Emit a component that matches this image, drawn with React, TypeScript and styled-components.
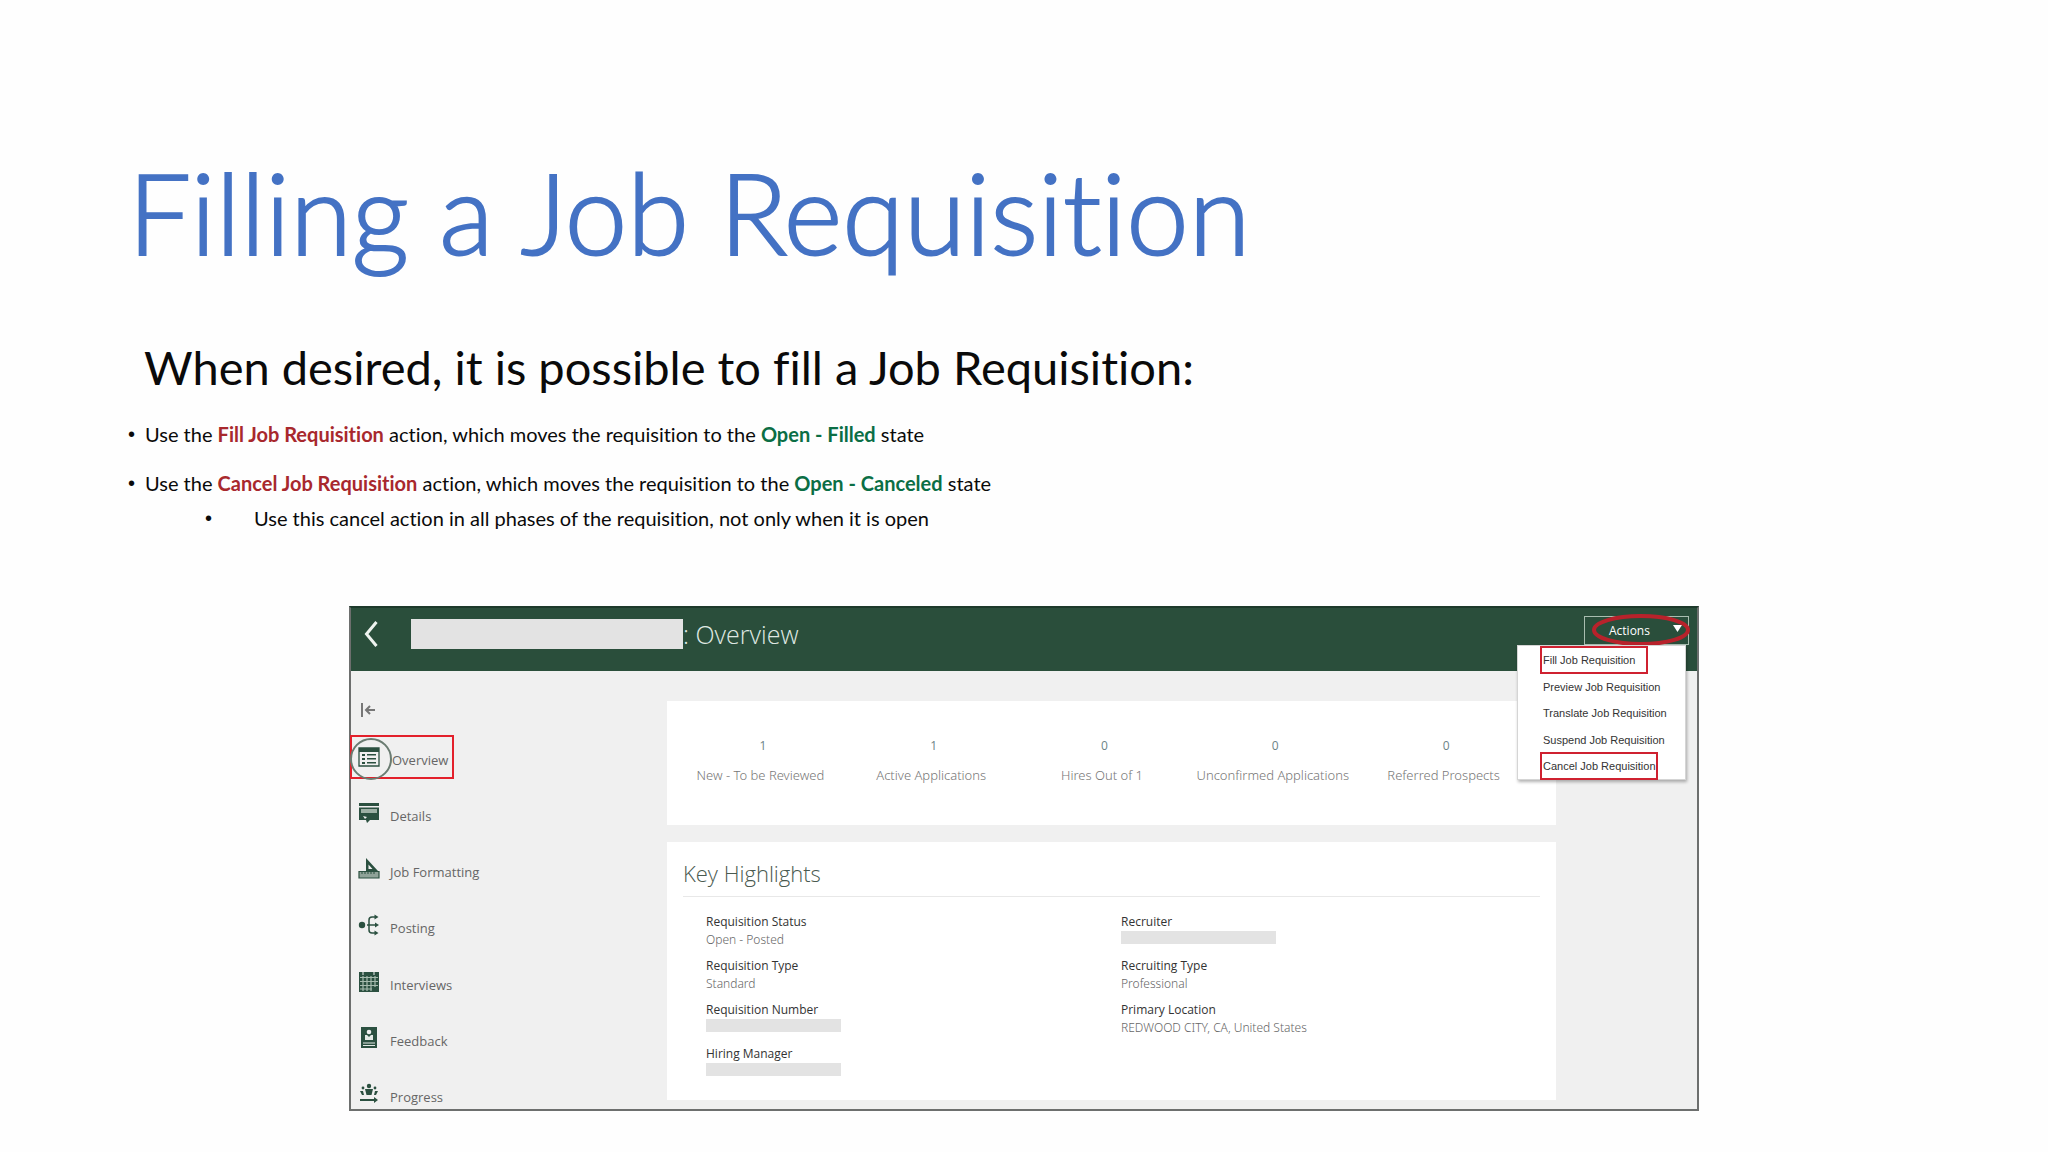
import React from "react";
import styled, { createGlobalStyle } from "styled-components";

const GlobalStyle = createGlobalStyle`
  * { box-sizing: border-box; }
  body { margin: 0; background: #fefefe; }
  h1, h2, p, ul, dl, dd { margin: 0; padding: 0; }
  ul { list-style: none; }
  button { font: inherit; border: 0; padding: 0; background: none; cursor: pointer; }
`;

const Slide = styled.main`
  padding: 140px 128px 40px;
  font-family: Lato, "Open Sans", sans-serif;
  font-variant-ligatures: none;
  color: #0a0a0a;
`;

const Title = styled.h1`
  font-size: 112px;
  line-height: 144px;
  font-weight: 300;
  color: #4472c4;
  -webkit-text-stroke: 2px #4472c4;
`;

const Lead = styled.p`
  padding-left: 16px;
  margin-top: 51px;
  font-size: 47px;
  line-height: 64px;
`;

const Bullets = styled.ul`
  margin-top: 19px;
  font-size: 20px;
  line-height: 32px;
`;

const Bullet = styled.li`
  display: grid;
  grid-template-columns: 17px 1fr;
  & + & { margin-top: 17px; }
  &::before {
    content: "•";
    font-family: "Liberation Sans", Arial, sans-serif;
  }
`;

const SubBullets = styled.ul`
  grid-column: 2;
  padding-left: 60px;
  margin-top: 3px;
`;

const SubBullet = styled.li`
  display: grid;
  grid-template-columns: 49px 1fr;
  &::before {
    content: "•";
    font-family: "Liberation Sans", Arial, sans-serif;
  }
`;

const Term = styled.strong<{ $tone: "action" | "state" }>`
  color: ${(p) => (p.$tone === "action" ? "#a8282d" : "#0b6e45")};
`;

const Panel = styled.section`
  width: 100%;
  max-width: 1350px;
  margin: 72px auto 0;
  border: 2px solid #6d6f6e;
  border-top-color: #1d3a2b;
  background: #f0f0f0;
  font-family: "Open Sans", "Noto Sans", sans-serif;
`;

const Header = styled.header`
  display: flex;
  align-items: center;
  height: 63px;
  padding: 0 8px 12px 13px;
  background: #2a4e3b;
  color: #dfe8e2;
`;

const BackButton = styled.button`
  display: flex;
  color: #eef3ef;
`;

const Redacted = styled.span<{ $w: number; $h: number }>`
  display: block;
  width: ${(p) => p.$w}px;
  height: ${(p) => p.$h}px;
  background: #e3e3e3;
`;

const PanelTitle = styled.h2`
  display: flex;
  align-items: center;
  flex: 1;
  margin-left: 33px;
  font-size: 25px;
  line-height: 32px;
  font-weight: 300;
  white-space: pre;
`;

const ActionsArea = styled.div`
  position: relative;
  align-self: flex-start;
  margin-top: 8px;
`;

const ActionsButton = styled.button`
  display: flex;
  align-items: center;
  justify-content: space-between;
  width: 105px;
  height: 29px;
  padding: 0 6px 0 24px;
  border: 1px solid #a9bdb0;
  color: #fff;
  font-size: 12px;
`;

const Ring = styled.svg`
  position: absolute;
  left: 8px;
  top: -3px;
  pointer-events: none;
`;

const Menu = styled.ul`
  position: absolute;
  top: 29px;
  right: 3px;
  z-index: 1;
  width: 169px;
  height: 135px;
  padding-left: 22px;
  background: #fff;
  border: 1px solid #d5d5d5;
  box-shadow: 1px 2px 3px rgba(0, 0, 0, 0.3);
  font-family: "Liberation Sans", Arial, sans-serif;
  display: flex;
  flex-direction: column;
  align-items: flex-start;
  li {
    flex: 1;
    min-height: 0;
  }
`;

const MenuButton = styled.button<{ $marked?: boolean }>`
  display: block;
  height: 28px;
  min-width: 108px;
  padding: 0 0 0 1px;
  border: 2px solid ${(p) => (p.$marked ? "#cf2130" : "transparent")};
  font-size: 11px;
  line-height: 24px;
  text-align: left;
  color: #333;
  white-space: nowrap;
`;

const Body = styled.div`
  display: flex;
`;

const Side = styled.aside`
  display: flex;
  flex-direction: column;
  width: 316px;
  padding-top: 31px;
`;

const Collapse = styled.button`
  display: flex;
  width: 16px;
  margin-left: 9px;
  color: #777;
`;

const Nav = styled.nav`
  display: flex;
  flex: 1;
  flex-direction: column;
  justify-content: space-between;
  align-items: flex-start;
  margin-top: 24px;
`;

const NavLink = styled.a<{ $marked?: boolean }>`
  position: relative;
  display: flex;
  align-items: center;
  gap: ${(p) => (p.$marked ? 12 : 10)}px;
  height: 30px;
  padding: 0 6px 0 7px;
  color: #666;
  font-size: 13px;
  line-height: 18px;
  text-decoration: none;
  svg { color: #2b5040; flex: none; }
  span { padding-top: 6px; }
  &::before {
    content: "";
    display: ${(p) => (p.$marked ? "block" : "none")};
    position: absolute;
    inset: -7px 0 -7px -1px;
    border: 2px solid #e3202b;
  }
  &::after {
    content: "";
    display: ${(p) => (p.$marked ? "block" : "none")};
    position: absolute;
    left: -1px;
    top: -4px;
    width: 38px;
    height: 38px;
    border: 2px solid #6b7c72;
    border-radius: 50%;
  }
`;

const Content = styled.div`
  flex: 1;
  display: flex;
  flex-direction: column;
  gap: 17px;
  padding: 30px 141px 9px 0;
`;

const Card = styled.section`
  background: #fff;
`;

const Stats = styled(Card)`
  display: grid;
  grid-template-columns: repeat(5, 1fr);
  padding: 35px 27px 40px 8px;
  text-align: center;
`;

const StatValue = styled.div`
  padding-left: 5px;
  font-size: 12px;
  line-height: 20px;
  color: #6d8387;
`;

const StatLabel = styled.div`
  margin-top: 9px;
  font-family: "Noto Sans", "Open Sans", sans-serif;
  font-size: 13px;
  line-height: 20px;
  font-weight: 300;
  color: #777;
  white-space: nowrap;
`;

const Highlights = styled(Card)`
  padding: 14px 16px 19px;
`;

const CardTitle = styled.h2`
  padding-bottom: 5px;
  border-bottom: 1px solid #e8e8e8;
  font-size: 22px;
  line-height: 35px;
  font-weight: 300;
  color: #4a5a50;
`;

const Columns = styled.div`
  display: grid;
  grid-template-columns: 415px 1fr;
  padding: 16px 0 0 23px;
`;

const Fields = styled.dl`
  display: flex;
  flex-direction: column;
  gap: 8px;
`;

const Field = styled.div`
  height: 36px;
  font-size: 12px;
  line-height: 18px;
  dt { color: #333; }
  dd {
    font-family: "Noto Sans", "Open Sans", sans-serif;
    font-weight: 300;
    color: #666;
  }
`;

const Back = () => (
  <svg width="14" height="26" viewBox="0 0 14 26" fill="none" stroke="currentColor" strokeWidth="3">
    <path d="M12.5 1 2.500 13l10 12" />
  </svg>
);

const Svg = ({ children }: { children: React.ReactNode }) => (
  <svg width="22" height="22" viewBox="0 0 22 22" fill="currentColor">{children}</svg>
);

const OverviewIcon = () => (
  <Svg>
    <path d="M1 2h20v18H1z" fill="none" stroke="currentColor" strokeWidth="1.300" />
    <path d="M1 2h20v4H1zM4 8h3v2H4zM4 12h3v2H4zM4 16h3v2H4zM9 8h9v1.500H9zM9 12h9v1.500H9zM9 16h9v1.500H9z" />
  </Svg>
);
const DetailsIcon = () => (
  <Svg>
    <path d="M1 1h20v3H1zM1 5.500h20V18h-9l-3 3-1-3H1z" />
    <path d="M3 7h16v4H3z" fill="#9db0a5" />
    <path d="m5 14 4 1-2 2z" fill="#f0f0f0" />
  </Svg>
);
const FormatIcon = () => (
  <Svg>
    <path d="M8 0v13h12zm2.500 6.500 4 4.500h-4z" fillRule="evenodd" />
    <path d="M1 13.500h20V20H1z" fill="#8fa298" stroke="currentColor" strokeWidth="1.200" />
    <path d="M4 14v2m3-2v2m3-2v2m3-2v2m3-2v2" stroke="currentColor" />
  </Svg>
);
const PostingIcon = () => (
  <Svg>
    <circle cx="4" cy="11" r="3.200" />
    <path d="M9 11h10M18 3h-4c-2 0-3 1-3 3v10c0 2 1 3 3 3h4" fill="none" stroke="currentColor" strokeWidth="1.500" />
    <path d="m16.500 0.500 4 2.500-4 2.500zM17 8.500l4 2.500-4 2.500zM16.500 16.500l4 2.500-4 2.500z" />
  </Svg>
);
const InterviewsIcon = () => (
  <Svg>
    <path d="M1 1h20v20H1z" />
    <path d="M2 6.500h18M2 10.500h18M2 14.500h18M2 18h12M5 5v15M9 5v15M13 5v15M17 5v11" stroke="#a6bbae" strokeWidth="1.200" />
    <path d="M5 0v4M16 0v4" stroke="#f0f0f0" />
  </Svg>
);
const FeedbackIcon = () => (
  <Svg>
    <path d="M3 0h16v21H3z" />
    <circle cx="11" cy="5" r="2.300" fill="#f0f0f0" />
    <path d="M7 8h2l2 2 2-2h2v5H7zM5 15.500h12v1H5zM5 18h12v1H5z" fill="#e4eae6" />
  </Svg>
);
const ProgressIcon = () => (
  <Svg>
    <circle cx="11" cy="3" r="2.200" />
    <path d="M7 6h8l-1.500 6h-5z" />
    <circle cx="5" cy="5" r="1.400" />
    <circle cx="17" cy="5" r="1.400" />
    <path d="M2 8h3l1 4H4zM20 8h-3l-1 4h2zM2 16h14v-2l4 3-4 3v-2H2z" />
  </Svg>
);

const navItems = [
  { label: "Overview", Icon: OverviewIcon },
  { label: "Details", Icon: DetailsIcon },
  { label: "Job Formatting", Icon: FormatIcon },
  { label: "Posting", Icon: PostingIcon },
  { label: "Interviews", Icon: InterviewsIcon },
  { label: "Feedback", Icon: FeedbackIcon },
  { label: "Progress", Icon: ProgressIcon },
];

const menuItems = ["Fill", "Preview", "Translate", "Suspend", "Cancel"];

const stats = [
  ["1", "New - To be Reviewed"],
  ["1", "Active Applications"],
  ["0", "Hires Out of 1"],
  ["0", "Unconfirmed Applications"],
  ["0", "Referred Prospects"],
];

type FieldData = { name: string; value?: string; mask?: number };

const leftFields: FieldData[] = [
  { name: "Requisition Status", value: "Open - Posted" },
  { name: "Requisition Type", value: "Standard" },
  { name: "Requisition Number", mask: 135 },
  { name: "Hiring Manager", mask: 135 },
];
const rightFields: FieldData[] = [
  { name: "Recruiter", mask: 155 },
  { name: "Recruiting Type", value: "Professional" },
  { name: "Primary Location", value: "REDWOOD CITY, CA, United States" },
];

const FieldList = ({ items }: { items: FieldData[] }) => (
  <Fields>
    {items.map((f) => (
      <Field key={f.name}>
        <dt>{f.name}</dt>
        <dd>{f.mask ? <Redacted $w={f.mask} $h={13} /> : f.value}</dd>
      </Field>
    ))}
  </Fields>
);

export default function App() {
  return (
    <Slide>
      <GlobalStyle />
      <Title>Filling a Job Requisition</Title>
      <Lead>When desired, it is possible to fill a Job Requisition:</Lead>
      <Bullets>
        <Bullet>
          <p>
            Use the <Term $tone="action">Fill Job Requisition</Term> action, which moves the requisition to the{" "}
            <Term $tone="state">Open - Filled</Term> state
          </p>
        </Bullet>
        <Bullet>
          <p>
            Use the <Term $tone="action">Cancel Job Requisition</Term> action, which moves the requisition to the{" "}
            <Term $tone="state">Open - Canceled</Term> state
          </p>
          <SubBullets>
            <SubBullet>Use this cancel action in all phases of the requisition, not only when it is open</SubBullet>
          </SubBullets>
        </Bullet>
      </Bullets>

      <Panel>
        <Header>
          <BackButton aria-label="Back"><Back /></BackButton>
          <PanelTitle>
            <Redacted $w={272} $h={30} />: Overview
          </PanelTitle>
          <ActionsArea>
            <ActionsButton>
              Actions
              <svg width="9" height="11" viewBox="0 0 9 11"><path d="M0 0h9L4.500 7z" fill="#fff" /></svg>
            </ActionsButton>
            <Ring width="99" height="34" viewBox="0 0 99 34">
              <ellipse cx="49" cy="17" rx="47" ry="14" fill="none" stroke="#b8222b" strokeWidth="4" />
            </Ring>
            <Menu>
              {menuItems.map((verb) => (
                <li key={verb}>
                  <MenuButton $marked={verb === "Fill" || verb === "Cancel"}>{verb} Job Requisition</MenuButton>
                </li>
              ))}
            </Menu>
          </ActionsArea>
        </Header>
        <Body>
          <Side>
            <Collapse aria-label="Collapse menu">
              <svg width="16" height="16" viewBox="0 0 16 16" fill="none" stroke="currentColor" strokeWidth="2">
                <path d="M2 1v14M15 8H6M10 4 6 8l4 4" />
              </svg>
            </Collapse>
            <Nav>
              {navItems.map(({ label, Icon }, i) => (
                <NavLink key={label} href="#" $marked={i === 0}>
                  <Icon />
                  <span>{label}</span>
                </NavLink>
              ))}
            </Nav>
          </Side>
          <Content>
            <Stats>
              {stats.map(([value, label]) => (
                <div key={label}>
                  <StatValue>{value}</StatValue>
                  <StatLabel>{label}</StatLabel>
                </div>
              ))}
            </Stats>
            <Highlights>
              <CardTitle>Key Highlights</CardTitle>
              <Columns>
                <FieldList items={leftFields} />
                <FieldList items={rightFields} />
              </Columns>
            </Highlights>
          </Content>
        </Body>
      </Panel>
    </Slide>
  );
}
